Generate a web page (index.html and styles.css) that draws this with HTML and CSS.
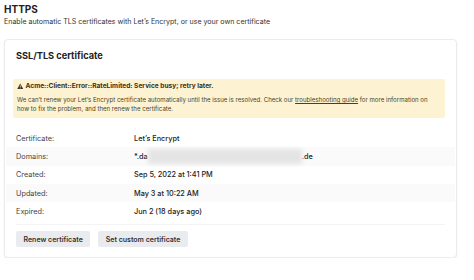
FILE: index.html
```html
<!DOCTYPE html>
<html>
<head>
<meta charset="utf-8">
<link rel="stylesheet" href="styles.css">
</head>
<body>
<div class="page">
  <h1 class="page-title">HTTPS</h1>
  <p class="page-sub">Enable automatic TLS certificates with Let’s Encrypt, or use your own certificate</p>
  <div class="card">
    <h2 class="card-title">SSL/TLS certificate</h2>
    <div class="alert">
      <div class="alert-title"><svg class="warn" viewBox="0 0 16 16"><path d="M8 1.2 15.3 14.6H0.7Z" fill="#3a3020"/><rect x="7.1" y="5.6" width="1.8" height="5" fill="#fdf3d3"/><rect x="7.1" y="11.6" width="1.8" height="1.7" fill="#fdf3d3"/></svg>Acme::Client::Error::RateLimited: Service busy; retry later.</div>
      <p class="alert-body"><span class="line">We can’t renew your Let’s Encrypt certificate automatically until the issue is resolved. Check our <span class="link">troubleshooting guide</span> for more information on</span><span class="line">how to fix the problem, and then renew the certificate.</span></p>
    </div>
    <div class="rows">
      <div class="row"><span class="label">Certificate:</span><span class="value">Let’s Encrypt</span></div>
      <div class="row alt"><span class="label">Domains:</span><span class="value">*.da<span class="blur"></span>.de</span></div>
      <div class="row"><span class="label">Created:</span><span class="value">Sep 5, 2022 at 1:41 PM</span></div>
      <div class="row alt"><span class="label">Updated:</span><span class="value">May 3 at 10:22 AM</span></div>
      <div class="row"><span class="label">Expired:</span><span class="value">Jun 2 (18 days ago)</span></div>
    </div>
    <div class="actions">
      <button class="btn">Renew certificate</button>
      <button class="btn">Set custom certificate</button>
    </div>
  </div>
</div>
</body>
</html>
```
FILE: styles.css
```css
html, body { margin: 0; padding: 0; background: #fff; }
body { font-family: Inter, "Liberation Sans", sans-serif; color: #222; }
.page { padding: 0 4px; width: 453px; }
.page-title { margin: 3px 0 0; font-size: 10px; line-height: 13px; font-weight: 700; color: #222; }
.page-sub { margin: 0; font-size: 7.05px; line-height: 11px; color: #333; }
.card {
  margin-top: 12px;
  border: 1px solid #ececec;
  border-radius: 4px;
  box-shadow: 0 1px 2px rgba(0,0,0,0.07);
  padding: 9px 11px 10px 11px;
  background: #fff;
}
.card-title { margin: 0; font-size: 9.2px; line-height: 14px; font-weight: 700; color: #222; }
.alert {
  margin: 16px 0 0 -3px;
  background: #fdf3d3;
  border-radius: 2px;
  padding: 3px 4px 5px 4px;
}
.alert-title { font-size: 6.6px; line-height: 9px; font-weight: 700; color: #3a3020; display: flex; align-items: center; }
.warn { width: 6.5px; height: 6.5px; margin-right: 2px; flex: none; }
.alert-body { margin: 5px 0 0; font-size: 6.1px; line-height: 8.5px; color: #4a3f22; }
.line { display: block; white-space: nowrap; }
.link { text-decoration: underline; }
.rows { margin: 11px -10px 0 -10px; }
.row { display: flex; align-items: center; height: 18.3px; padding-left: 10px; font-size: 7.3px; }
.row.alt { background: #fafafa; }
.label { width: 118px; color: #444; }
.value { font-weight: 500; color: #222; display: flex; align-items: center; }
.blur { display: inline-block; width: 154px; height: 15px; background: #e4e4e4; filter: blur(2px); }
.actions { margin-top: 4px; padding-top: 6px; border-top: 1px solid #f4f4f4; display: flex; gap: 8px; }
.btn {
  font-family: Inter, "Liberation Sans", sans-serif;
  font-size: 7px; font-weight: 600; color: #333;
  background: #e9ebee; border: none; border-radius: 2px;
  height: 16px; padding: 0 7.5px; margin: 0;
}
```
